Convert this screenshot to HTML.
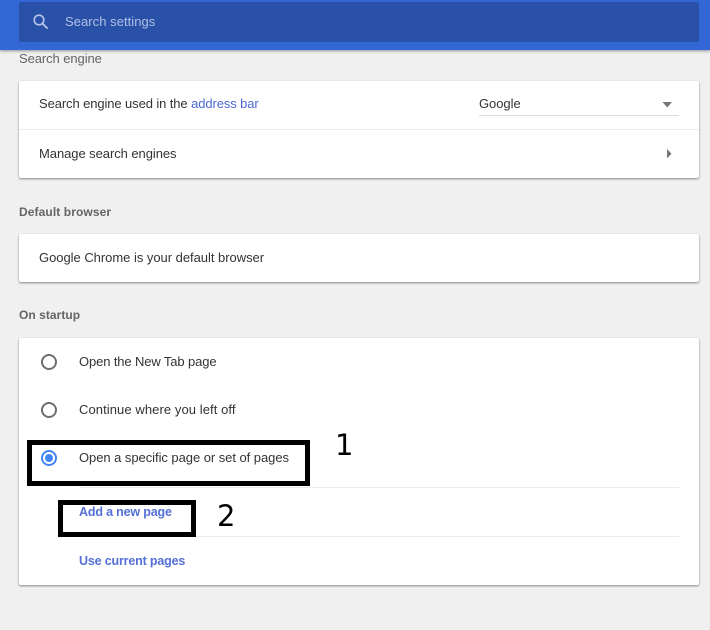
<!DOCTYPE html>
<html>
<head>
<meta charset="utf-8">
<style>
html,body{margin:0;padding:0;width:710px;height:630px;overflow:hidden;background:#f0f0f0;}
body{position:relative;font-family:"Liberation Sans",sans-serif;}
.a{position:absolute;}
.t{position:absolute;font-size:13px;line-height:16px;height:16px;color:#333;white-space:nowrap;}
.h{color:#646464;font-weight:normal;}
.l{color:#5470d8;font-weight:bold;font-size:12.5px;letter-spacing:-.17px;}
.card{position:absolute;left:19px;width:680px;background:#fff;border-radius:2px;box-shadow:0 1px 2px rgba(0,0,0,.45);}
.div{position:absolute;height:1px;background:#ebebeb;}
.box{position:absolute;box-sizing:border-box;border:5px solid #000;}
.radio{position:absolute;left:41px;width:16px;height:16px;box-sizing:border-box;border:2px solid #6e6e6e;border-radius:50%;}
.num{position:absolute;font-family:"DejaVu Sans",sans-serif;font-size:29px;line-height:34px;color:#000;}
</style>
</head>
<body>
<div class="a" style="left:0;top:0;width:710px;height:50px;background:#3367d6;box-shadow:0 1px 3px rgba(0,0,0,.4);"></div>
<div class="a" style="left:19px;top:2px;width:680px;height:40px;background:#2a51a8;border-radius:2px;"></div>
<svg class="a" style="left:32px;top:13px" width="18" height="18" viewBox="0 0 18 18" fill="none" stroke="#b6c6e8"><circle cx="7" cy="7" r="4.8" stroke-width="1.6"/><path d="M10.6 10.6L15.6 15.6" stroke-width="1.8"/></svg>
<div class="t" style="left:65px;top:14px;color:#b0c0e6;letter-spacing:.05px;">Search settings</div>

<div class="t h" style="left:19px;top:51px;letter-spacing:-.08px;">Search engine</div>
<div class="card" style="top:81px;height:97px;"></div>
<div class="t" style="left:39px;top:96px;letter-spacing:-.1px;">Search engine used in the <span style="color:#4a69d6">address bar</span></div>
<div class="t" style="left:479px;top:96px;letter-spacing:-.05px;">Google</div>
<div class="a" style="left:479px;top:115px;width:200px;height:1px;background:#dcdcdc;"></div>
<svg class="a" style="left:662px;top:102px" width="11" height="6"><path d="M0.5 0H10L5.25 5.5Z" fill="#757575"/></svg>
<div class="div" style="left:19px;top:129px;width:680px;"></div>
<div class="t" style="left:39px;top:146px;letter-spacing:-.06px;">Manage search engines</div>
<svg class="a" style="left:666px;top:149px" width="6" height="10"><path d="M1 0V9.5L5.5 4.75Z" fill="#757575"/></svg>

<div class="t h" style="left:19px;top:204px;font-weight:bold;font-size:12px;letter-spacing:.1px;">Default browser</div>
<div class="card" style="top:234px;height:48px;"></div>
<div class="t" style="left:39px;top:250px;letter-spacing:-.03px;">Google Chrome is your default browser</div>

<div class="t h" style="left:19px;top:307px;font-weight:bold;font-size:12px;letter-spacing:.05px;">On startup</div>
<div class="card" style="top:338px;height:247px;"></div>
<div class="radio" style="top:354px;"></div>
<div class="t" style="left:79px;top:354px;letter-spacing:-.12px;">Open the New Tab page</div>
<div class="radio" style="top:402px;"></div>
<div class="t" style="left:79px;top:402px;letter-spacing:.08px;">Continue where you left off</div>
<div class="radio" style="top:450px;border-color:#4285f4;"></div>
<div class="a" style="left:45px;top:454px;width:8px;height:8px;border-radius:50%;background:#4285f4;"></div>
<div class="t" style="left:79px;top:450px;letter-spacing:-.05px;">Open a specific page or set of pages</div>
<div class="div" style="left:79px;top:487px;width:600px;"></div>
<div class="t l" style="left:79px;top:504px;">Add a new page</div>
<div class="div" style="left:79px;top:536px;width:600px;"></div>
<div class="t l" style="left:79px;top:553px;">Use current pages</div>

<div class="box" style="left:27px;top:440px;width:283px;height:46px;"></div>
<div class="box" style="left:58px;top:500px;width:138px;height:37px;"></div>
<div class="num" style="left:335px;top:428px;">1</div>
<div class="num" style="left:217px;top:499px;">2</div>
</body>
</html>
